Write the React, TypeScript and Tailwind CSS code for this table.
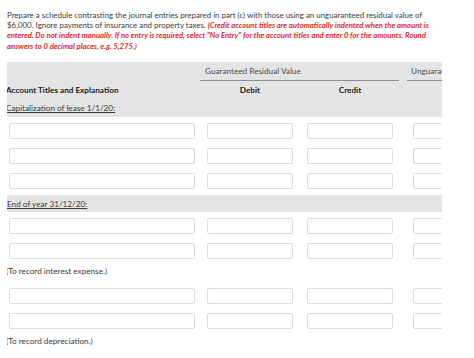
import React from "react";

const InputRow = () => (
  <div className="flex">
    <div className="ml-[3px] h-[16px] w-[186px] shrink-0 rounded-[2px] border border-[#dcdcdc] bg-white" />
    <div className="ml-[12px] h-[16px] w-[86px] shrink-0 rounded-[2px] border border-[#dcdcdc] bg-white" />
    <div className="ml-[14px] h-[16px] w-[86px] shrink-0 rounded-[2px] border border-[#dcdcdc] bg-white" />
    <div className="ml-[20px] h-[16px] w-[86px] shrink-0 rounded-[2px] border border-[#dcdcdc] bg-white" />
    <div className="ml-[14px] h-[16px] w-[86px] shrink-0 rounded-[2px] border border-[#dcdcdc] bg-white" />
  </div>
);

const Inputs = ({ n }: { n: number }) => (
  <div className="flex flex-col gap-[9px] py-[6px]">
    {Array.from({ length: n }).map((_, i) => (
      <InputRow key={i} />
    ))}
  </div>
);

export default function App() {
  return (
    <div
      className="h-[358px] w-[474px] overflow-hidden bg-white text-[#3a3a3a]"
      style={{ fontFamily: "Lato, 'Open Sans', sans-serif" }}
    >
      <div className="pl-[7px] pt-[10px] text-[7.9px] leading-[10.2px] whitespace-nowrap">
        Prepare a schedule contrasting the journal entries prepared in part (c) with those using an unguaranteed residual value of
        <br />
        $6,000. Ignore payments of insurance and property taxes.{" "}
        <span className="text-[7.7px] font-bold italic text-[#e2282c]">
          (Credit account titles are automatically indented when the amount is
          <br />
          entered. Do not indent manually. If no entry is required, select "No Entry" for the account titles and enter 0 for the amounts. Round
          <br />
          answers to 0 decimal places, e.g. 5,275.)
        </span>
      </div>

      <div className="ml-[7px] mt-[11px] w-[435px] overflow-hidden">
        <div className="-ml-[1px] w-[700px] text-[8.2px]">
          <div className="bg-[#e4e4e4]">
            <div className="flex h-[19px]">
              <div className="w-[194px] shrink-0" />
              <div className="flex w-[199px] shrink-0 items-center border-b border-[#8c8c8c] pl-[5px] text-[#4a4a4a]">
                Guaranteed Residual Value
              </div>
              <div className="ml-[8px] flex w-[199px] shrink-0 items-center border-b border-[#8c8c8c] pl-[4px] text-[#4a4a4a]">
                Unguaranteed Residual Value
              </div>
            </div>
            <div className="flex h-[19px] items-center font-bold text-[#222]">
              <div className="w-[201px] shrink-0">Account Titles and Explanation</div>
              <div className="w-[86px] shrink-0 text-center">Debit</div>
              <div className="ml-[14px] w-[86px] shrink-0 text-center">Credit</div>
            </div>
            <div className="flex h-[17px] items-center">
              <span className="underline underline-offset-[1px]">Capitalization of lease 1/1/20:</span>
            </div>
          </div>

          <Inputs n={3} />

          <div className="flex h-[17px] items-center bg-[#e4e4e4] pt-[2px]">
            <span className="ml-[1px] underline underline-offset-[1px]">End of year 31/12/20:</span>
          </div>

          <Inputs n={2} />

          <div className="h-[17px] pt-[1px] leading-[10px]">(To record interest expense.)</div>

          <Inputs n={2} />

          <div className="h-[17px] pt-[1px] leading-[10px]">(To record depreciation.)</div>
        </div>
      </div>
    </div>
  );
}
